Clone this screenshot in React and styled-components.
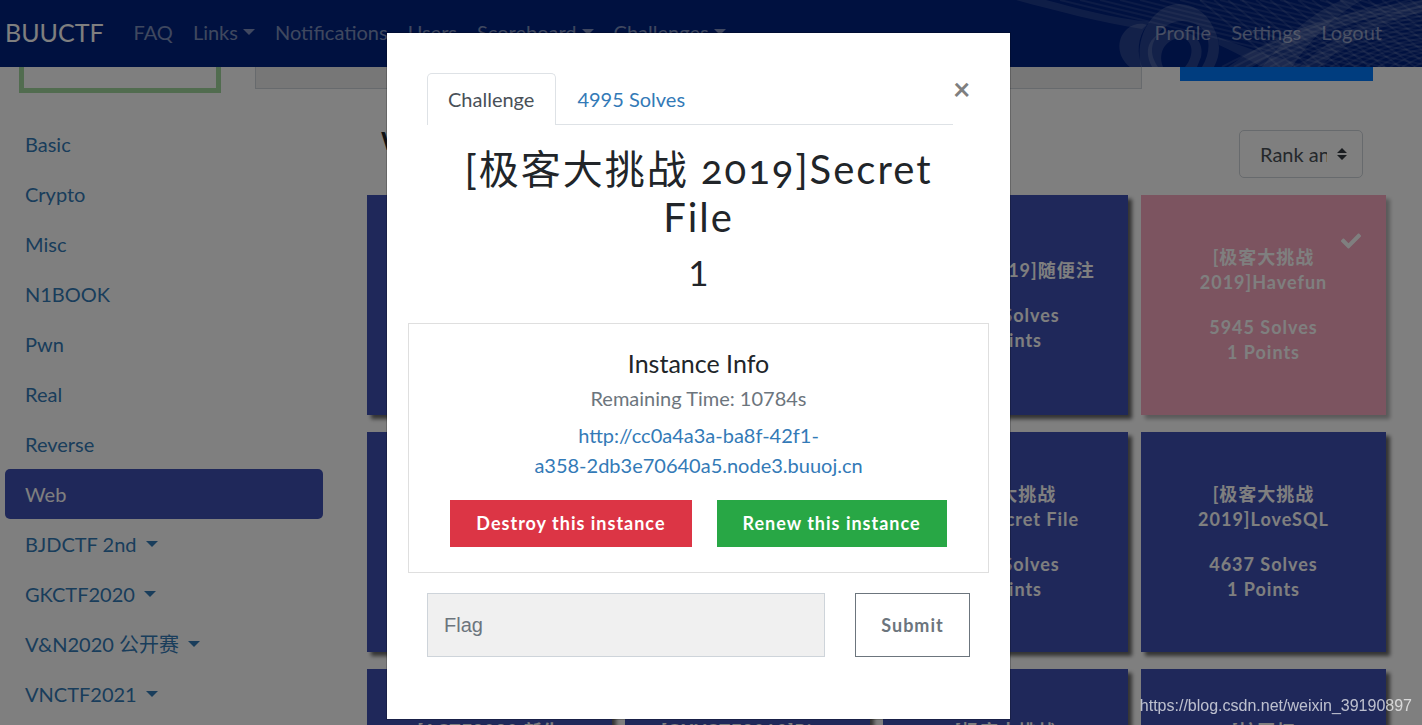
import React from "react";
import styled, { createGlobalStyle, css } from "styled-components";
import { FaCheck } from "react-icons/fa";

const GlobalStyle = createGlobalStyle`
  *, *::before, *::after { box-sizing: border-box; }
  html, body { margin: 0; padding: 0; }
  body {
    font-family: Lato, "Noto Sans CJK SC", sans-serif;
    font-size: 20px;
    line-height: 30px;
    color: #212529;
    background: #fff;
    overflow: hidden;
  }
  button, input, select { font: inherit; margin: 0; }
  h1, h2, h3, h4, p { margin: 0; }
  a { color: #337ab7; text-decoration: none; }
`;

const Shell = styled.div`
  height: 100vh;
  overflow: hidden;
`;

/* ---------- navigation bar ---------- */

const Navbar = styled.header`
  position: relative;
  display: flex;
  align-items: center;
  height: 67px;
  padding: 0 30px 4px 5px;
  background: #002280;
`;

const NavArt = styled.svg`
  position: absolute;
  top: 0;
  right: 0;
  width: 422px;
  height: 67px;
`;

const Brand = styled.a`
  margin-right: 20px;
  font-size: 25px;
  color: #fff;
`;

const NavGroup = styled.nav`
  position: relative;
  display: flex;
  margin-left: ${(p) => (p.$end ? "auto" : "0")};
`;

const NavLink = styled.a`
  display: flex;
  align-items: center;
  padding: 0 10px;
  color: rgba(255, 255, 255, 0.5);
`;

const Caret = styled.span`
  margin-left: ${(p) => (p.$wide ? "9px" : "5px")};
  border: 6px solid transparent;
  border-top-color: currentColor;
  border-bottom: 0;
`;

/* ---------- page behind the dialog ---------- */

const Strip = styled.div`
  display: flex;
  align-items: flex-start;
  height: 52px;
  padding: 0 49px 0 19px;
`;

const LogoFrame = styled.div`
  width: 202px;
  height: 26px;
  margin-right: 34px;
  border: 5px solid #a3d89e;
  border-top: 0;
`;

const SearchEdge = styled.div`
  flex: 1;
  height: 22px;
  margin-right: 38px;
  background: #efefef;
  border: 1px solid #ced4da;
  border-top: 0;
`;

const ActionEdge = styled.div`
  width: 193px;
  height: 14px;
  background: #007bff;
`;

const Page = styled.main`
  display: flex;
  gap: 44px;
  padding: 0 36px 0 5px;
`;

const Sidebar = styled.nav`
  flex: 0 0 318px;
  display: flex;
  flex-direction: column;
`;

const SideLink = styled.a`
  display: flex;
  align-items: center;
  height: 50px;
  padding: 0 20px;
  border-radius: 5px;
  ${(p) =>
    p.$active &&
    css`
      color: #fff;
      background: #3f51b5;
    `}
`;

const Board = styled.section`
  flex: 1;
  min-width: 0;
`;

const BoardHead = styled.div`
  display: flex;
  align-items: flex-start;
  justify-content: space-between;
  height: 76px;
  padding: 11px 23px 0 14px;
`;

const BoardTitle = styled.h3`
  font-size: 25px;
  line-height: 20px;
  font-weight: 700;
`;

const SelectBox = styled.div`
  position: relative;
`;

const SortSelect = styled.select`
  display: block;
  width: 124px;
  height: 48px;
  padding: 0 35px 0 20px;
  border: 1px solid #ced4da;
  border-radius: 5px;
  background: transparent;
  color: #495057;
  appearance: none;
`;

const SelectArrows = styled.svg`
  position: absolute;
  top: 18px;
  right: 15px;
  width: 12px;
  height: 12px;
  pointer-events: none;
`;

const CardGrid = styled.div`
  display: grid;
  grid-template-columns: repeat(4, minmax(0, 1fr));
  gap: 17px 13px;
`;

const Card = styled.button`
  position: relative;
  display: flex;
  flex-direction: column;
  align-items: center;
  justify-content: center;
  gap: 20px;
  height: 220px;
  padding: 0 26px;
  border: 0;
  color: #fff;
  background: ${(p) => (p.$solved ? "#f8a8c0" : "#3f51b5")};
  box-shadow: 4px 4px 4px rgba(0, 0, 0, ${(p) => (p.$solved ? 0.3 : 0.6)});
  && {
    font-size: 18px;
    line-height: 25px;
    font-weight: 700;
    letter-spacing: 1px;
  }
`;

const SolvedMark = styled(FaCheck)`
  position: absolute;
  top: 36px;
  right: 25px;
  width: 20px;
  height: 20px;
`;

/* ---------- dialog ---------- */

const Backdrop = styled.div`
  position: fixed;
  inset: 0;
  background: rgba(0, 0, 0, 0.5);
`;

const DialogLayer = styled.div`
  position: fixed;
  inset: 0;
  padding: 32px 25px 0 0;
`;

const Dialog = styled.div`
  max-width: 625px;
  margin: 0 auto;
  padding: 40px 40px 62px;
  border: 1px solid rgba(0, 0, 0, 0.2);
  background: #fff;
  background-clip: padding-box;
`;

const DialogHead = styled.div`
  display: flex;
  align-items: flex-start;
`;

const Tabs = styled.div`
  flex: 1;
  display: flex;
  border-bottom: 1px solid #dee2e6;
`;

const Tab = styled.a`
  margin-bottom: -1px;
  padding: 10px 21px 11px 20px;
  border: 1px solid transparent;
  border-bottom: 0;
  border-radius: 5px 5px 0 0;
  ${(p) =>
    p.$active &&
    css`
      color: #495057;
      background: #fff;
      border-color: #dee2e6;
    `}
`;

const CloseButton = styled.button`
  width: 17px;
  padding: 0;
  border: 0;
  background: none;
  color: #7f7f7f;
  && {
    font-size: 30px;
    line-height: 30px;
    font-weight: 700;
  }
`;

const ChallengeName = styled.h2`
  padding-top: 20px;
  font-size: 40px;
  line-height: 48px;
  font-weight: 400;
  font-variant-numeric: oldstyle-nums;
  letter-spacing: 2px;
  text-align: center;
`;

const ChallengeValue = styled.h3`
  padding: 10px 0 30px;
  font-size: 35px;
  line-height: 42px;
  font-weight: 400;
  text-align: center;
`;

const InstanceCard = styled.section`
  margin: 0 -19px 20px;
  padding: 24px 25px 25px;
  border: 1px solid #dfdfdf;
  text-align: center;
`;

const InstanceTitle = styled.h4`
  margin-bottom: 5px;
  font-size: 25px;
  line-height: 30px;
  font-weight: 400;
`;

const Remaining = styled.p`
  margin-bottom: 7px;
  color: #6c757d;
`;

const HostName = styled.span`
  white-space: nowrap;
`;

const InstanceActions = styled.div`
  display: flex;
  justify-content: center;
  gap: 25px;
  margin-top: 20px;
`;

const ActionButton = styled.button`
  height: 47px;
  padding: 0 26px 1px;
  border: 0;
  color: #fff;
  background: ${(p) => (p.$danger ? "#dc3545" : "#28a745")};
  && {
    font-size: 18px;
    font-weight: 700;
    letter-spacing: 1px;
  }
`;

const FlagForm = styled.form`
  display: flex;
  gap: 30px;
`;

const FlagInput = styled.input`
  flex: 1;
  min-width: 0;
  height: 64px;
  padding: 0 16px;
  border: 1px solid #ced4da;
  border-radius: 0;
  background: #f0f0f0;
  && {
    font-family: "Liberation Sans", sans-serif;
  }
  &::placeholder {
    color: #6c757d;
    opacity: 1;
  }
`;

const SubmitButton = styled.button`
  width: 115px;
  height: 64px;
  padding: 0;
  border: 1px solid #6c757d;
  color: #6c757d;
  background: #fff;
  && {
    font-size: 18px;
    font-weight: 700;
    letter-spacing: 1px;
  }
`;

const Watermark = styled.div`
  position: fixed;
  right: 10px;
  bottom: 7px;
  font-family: "Liberation Sans", sans-serif;
  font-size: 16px;
  line-height: 24px;
  color: rgba(255, 255, 255, 0.7);
`;

const navLinks = [
  { label: "FAQ" },
  { label: "Links", menu: true },
  { label: "Notifications" },
  { label: "Users" },
  { label: "Scoreboard", menu: true },
  { label: "Challenges", menu: true },
];

const categories = [
  { label: "Basic" },
  { label: "Crypto" },
  { label: "Misc" },
  { label: "N1BOOK" },
  { label: "Pwn" },
  { label: "Real" },
  { label: "Reverse" },
  { label: "Web", active: true },
  { label: "BJDCTF 2nd", menu: true },
  { label: "GKCTF2020", menu: true },
  { label: "V&N2020 公开赛", menu: true },
  { label: "VNCTF2021", menu: true },
];

const challenges = [
  { id: 1 },
  { id: 2 },
  { id: 3, name: "[强网杯 2019]随便注", solves: 6480 },
  { id: 4, name: "[极客大挑战 2019]Havefun", solves: 5945, solved: true },
  { id: 5 },
  { id: 6 },
  { id: 7, name: "[极客大挑战 2019]Secret File", solves: 4995 },
  { id: 8, name: "[极客大挑战 2019]LoveSQL", solves: 4637 },
  { id: 9, name: "[ACTF2020 新生赛]Exec", solves: 4420 },
  { id: 10, name: "[GXYCTF2019]Ping Ping Ping", solves: 4215 },
  { id: 11, name: "[极客大挑战 2019]Knife", solves: 4108 },
  { id: 12, name: "[护网杯 2018]easy_tornado", solves: 3870 },
];

const fan = Array.from({ length: 16 }, (_, i) => i);
const ribs = Array.from({ length: 18 }, (_, i) => i);

function HeaderArt() {
  return (
    <NavArt viewBox="0 0 422 67" aria-hidden="true">
      <g fill="none" stroke="#fff" strokeWidth="2">
        <g strokeOpacity="0.1">
          {fan.map((i) => (
            <path key={i} d={`M${60 + i * 20} 0 Q${210 + i * 14} ${36 - i} 440 ${92 - i * 6}`} />
          ))}
        </g>
        <g strokeOpacity="0.1">
          {ribs.map((i) => (
            <path key={i} d={`M${222 + i * 12} 67 Q${290 + i * 10} ${30 + i} 440 ${-14 + i * 5}`} />
          ))}
          {ribs.map((i) => (
            <path key={i} d={`M${200 + i * 14} 0 L${280 + i * 15} 67`} />
          ))}
        </g>
      </g>
      <g fill="#fff">
        <path fillOpacity="0.12" d="M16 0 C60 12 100 22 142 29 L150 22 C112 18 76 8 46 0Z" />
        <path fillOpacity="0.12" d="M218 37 C250 50 285 60 312 67 L262 67 C246 58 230 50 219 45Z" />
        <path
          fillOpacity="0.15"
          fillRule="evenodd"
          d="M141 67 C135 40 148 16 166 7 C182 -1 204 8 212 25 C221 40 221 54 214 67 L202 67 C212 50 210 34 199 26 C183 15 162 23 155 39 C149 50 153 60 158 67Z"
        />
        <path fillOpacity="0.15" d="M130 67 C118 58 115 40 127 29 C134 23 142 23 147 25 C137 38 137 54 142 67Z" />
        <path
          fillOpacity="0.15"
          fillRule="evenodd"
          d="M152 67 C142 48 151 33 170 31 C191 28 205 41 201 57 L197 67 L185 67 C195 55 193 40 182 38 C167 38 157 51 163 67Z"
        />
        <path fillOpacity="0.12" d="M228 67 C268 37 330 12 422 0 L422 8 C355 18 298 38 252 67Z" />
        <path fillOpacity="0.12" d="M262 67 C285 39 306 16 342 0 L362 0 C334 16 311 38 292 67Z" />
        <path fillOpacity="0.1" d="M300 67 C324 42 370 15 422 5 L422 12 C375 24 342 45 320 67Z" />
      </g>
    </NavArt>
  );
}

export default function App() {
  return (
    <>
      <GlobalStyle />
      <Shell>
        <Navbar>
          <HeaderArt />
          <Brand href="#">BUUCTF</Brand>
          <NavGroup>
            {navLinks.map((l) => (
              <NavLink href="#" key={l.label}>
                {l.label}
                {l.menu && <Caret />}
              </NavLink>
            ))}
          </NavGroup>
          <NavGroup $end>
            <NavLink href="#">Profile</NavLink>
            <NavLink href="#">Settings</NavLink>
            <NavLink href="#">Logout</NavLink>
          </NavGroup>
        </Navbar>

        <Strip>
          <LogoFrame />
          <SearchEdge />
          <ActionEdge />
        </Strip>

        <Page>
          <Sidebar>
            {categories.map((c) => (
              <SideLink href="#" key={c.label} $active={c.active}>
                {c.label}
                {c.menu && <Caret $wide />}
              </SideLink>
            ))}
          </Sidebar>
          <Board>
            <BoardHead>
              <BoardTitle>Web</BoardTitle>
              <SelectBox>
                <SortSelect aria-label="Sort challenges">
                  <option>Rank and</option>
                </SortSelect>
                <SelectArrows viewBox="0 0 12 12" aria-hidden="true">
                  <path fill="#343a40" d="M6 0 L11 5 H1Z M6 12 L1 7 H11Z" />
                </SelectArrows>
              </SelectBox>
            </BoardHead>
            <CardGrid>
              {challenges.map((c) => (
                <Card key={c.id} $solved={c.solved}>
                  {c.solved && <SolvedMark />}
                  {c.name && (
                    <>
                      <span>{c.name}</span>
                      <span>
                        {c.solves} Solves
                        <br />1 Points
                      </span>
                    </>
                  )}
                </Card>
              ))}
            </CardGrid>
          </Board>
        </Page>
      </Shell>

      <Backdrop />
      <DialogLayer>
        <Dialog role="dialog" aria-modal="true" aria-labelledby="challenge-name">
          <DialogHead>
            <Tabs>
              <Tab href="#" $active>
                Challenge
              </Tab>
              <Tab href="#">4995 Solves</Tab>
            </Tabs>
            <CloseButton aria-label="Close">×</CloseButton>
          </DialogHead>
          <ChallengeName id="challenge-name">[极客大挑战 2019]Secret File</ChallengeName>
          <ChallengeValue>1</ChallengeValue>
          <InstanceCard>
            <InstanceTitle>Instance Info</InstanceTitle>
            <Remaining>Remaining Time: 10784s</Remaining>
            <a href="#">
              http://cc0a4a3a-ba8f-42f1-
              <wbr />
              <HostName>a358-2db3e70640a5.node3.buuoj.cn</HostName>
            </a>
            <InstanceActions>
              <ActionButton $danger>Destroy this instance</ActionButton>
              <ActionButton>Renew this instance</ActionButton>
            </InstanceActions>
          </InstanceCard>
          <FlagForm onSubmit={(e) => e.preventDefault()}>
            <FlagInput type="text" placeholder="Flag" aria-label="Flag" />
            <SubmitButton type="submit">Submit</SubmitButton>
          </FlagForm>
        </Dialog>
      </DialogLayer>
      <Watermark>https://blog.csdn.net/weixin_39190897</Watermark>
    </>
  );
}
